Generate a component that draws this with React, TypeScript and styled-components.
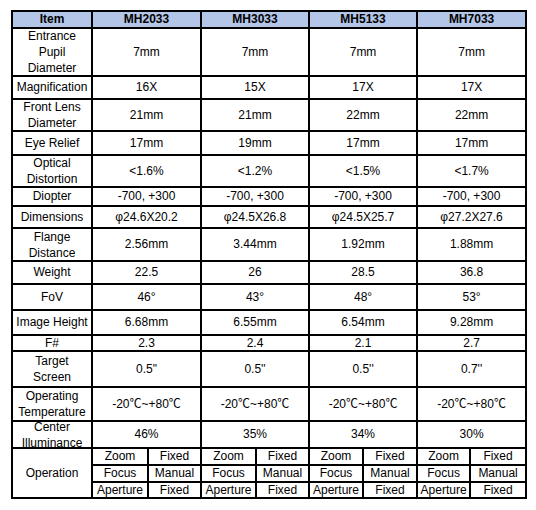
import React from "react";
import styled, { createGlobalStyle } from "styled-components";

const Global = createGlobalStyle`
  html, body { margin: 0; padding: 0; background: #ffffff; }
  body { font-family: "Liberation Sans", Arial, sans-serif; }
`;

const Page = styled.div`
  padding: 10px 0 0 11px;
`;

const Table = styled.table`
  border-collapse: collapse;
  table-layout: fixed;
  width: 514px;
  font-family: "Liberation Sans", "Noto Sans CJK SC", sans-serif;
  font-size: 12px;
  color: #000;
`;

const Row = styled.tr<{ $h: number }>`
  height: ${(p) => p.$h}px;
`;

const HeadCell = styled.th`
  border: 2px solid #000;
  background: #b4c6e7;
  font-weight: bold;
  font-size: 12px;
  padding: 0;
  line-height: 13px;
  text-align: center;
  vertical-align: middle;
`;

const Cell = styled.td`
  border: 2px solid #000;
  padding: 0;
  text-align: center;
  vertical-align: middle;
  line-height: 13px;
`;

const Lines = styled.span`
  display: block;
  white-space: pre-line;
  line-height: 16px;
  margin: -4px 0;
`;

const SubCell = styled(Cell)`
  line-height: 13px;
`;

const models = ["MH2033", "MH3033", "MH5133", "MH7033"];
const colWidths = [80, 56, 53, 55, 53, 54, 54, 53, 56];

type Spec = { label: string; values: string[]; h: number };

const specs: Spec[] = [
  { label: "Entrance\nPupil\nDiameter", values: ["7mm", "7mm", "7mm", "7mm"], h: 48 },
  { label: "Magnification", values: ["16X", "15X", "17X", "17X"], h: 23 },
  { label: "Front Lens\nDiameter", values: ["21mm", "21mm", "22mm", "22mm"], h: 32 },
  { label: "Eye Relief", values: ["17mm", "19mm", "17mm", "17mm"], h: 24 },
  { label: "Optical\nDistortion", values: ["<1.6%", "<1.2%", "<1.5%", "<1.7%"], h: 32 },
  { label: "Diopter", values: ["-700, +300", "-700, +300", "-700, +300", "-700, +300"], h: 19 },
  { label: "Dimensions", values: ["φ24.6X20.2", "φ24.5X26.8", "φ24.5X25.7", "φ27.2X27.6"], h: 22 },
  { label: "Flange\nDistance", values: ["2.56mm", "3.44mm", "1.92mm", "1.88mm"], h: 33 },
  { label: "Weight", values: ["22.5", "26", "28.5", "36.8"], h: 23 },
  { label: "FoV", values: ["46°", "43°", "48°", "53°"], h: 26 },
  { label: "Image Height", values: ["6.68mm", "6.55mm", "6.54mm", "9.28mm"], h: 25 },
  { label: "F#", values: ["2.3", "2.4", "2.1", "2.7"], h: 16 },
  { label: "Target\nScreen", values: ["0.5\"", "0.5''", "0.5''", "0.7''"], h: 36 },
  { label: "Operating\nTemperature", values: ["-20℃~+80℃", "-20℃~+80℃", "-20℃~+80℃", "-20℃~+80℃"], h: 34 },
  { label: "Center\nIlluminance", values: ["46%", "35%", "34%", "30%"], h: 27 },
];

const operation: { k: string; v: string; h: number }[] = [
  { k: "Zoom", v: "Fixed", h: 17 },
  { k: "Focus", v: "Manual", h: 17 },
  { k: "Aperture", v: "Fixed", h: 16 },
];

export default function App() {
  return (
    <>
      <Global />
      <Page>
        <Table>
          <colgroup>
            {colWidths.map((w, i) => (
              <col key={i} style={{ width: w }} />
            ))}
          </colgroup>
          <thead>
            <Row $h={17}>
              <HeadCell>Item</HeadCell>
              {models.map((m) => (
                <HeadCell key={m} colSpan={2}>
                  {m}
                </HeadCell>
              ))}
            </Row>
          </thead>
          <tbody>
            {specs.map((s) => (
              <Row $h={s.h} key={s.label}>
                <Cell>
                  {s.label.includes("\n") ? <Lines>{s.label}</Lines> : s.label}
                </Cell>
                {s.values.map((v, i) => (
                  <Cell key={i} colSpan={2}>
                    {v}
                  </Cell>
                ))}
              </Row>
            ))}
            {operation.map((o, r) => (
              <Row $h={o.h} key={o.k}>
                {r === 0 && <Cell rowSpan={3}>Operation</Cell>}
                {models.map((m) => (
                  <React.Fragment key={m}>
                    <SubCell>{o.k}</SubCell>
                    <SubCell>{o.v}</SubCell>
                  </React.Fragment>
                ))}
              </Row>
            ))}
          </tbody>
        </Table>
      </Page>
    </>
  );
}
